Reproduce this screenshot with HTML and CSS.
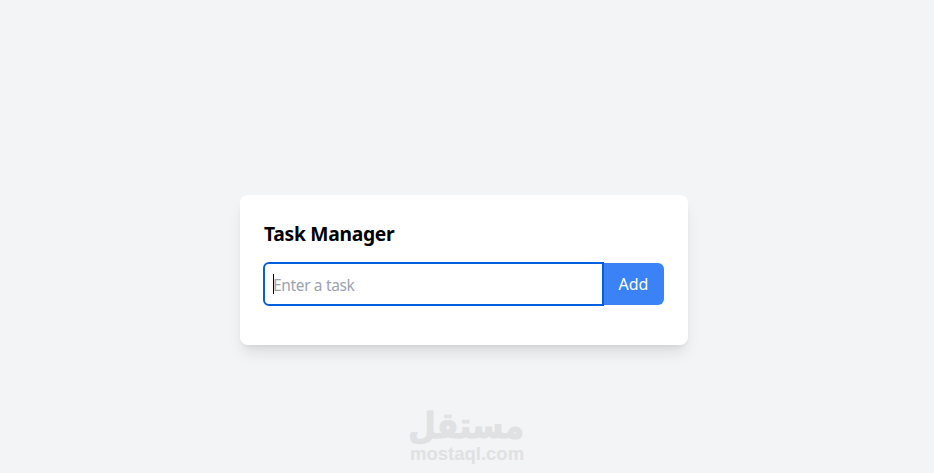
FILE: index.html
```html
<!DOCTYPE html>
<html lang="en">
<head>
    <meta charset="UTF-8">
    <meta name="viewport" content="width=device-width, initial-scale=1.0">
    <title>Task Manager</title>
    <link rel="stylesheet" href="styles.css">
</head>
<body>
    <div class="card">
        <h1 class="card_title">Task Manager</h1>
        <div class="task_form">
            <div class="task_input">
                <span class="caret"></span>
                <span class="placeholder">Enter a task</span>
            </div>
            <button class="add_btn" type="button">Add</button>
        </div>
    </div>

    <div class="watermark">
        <div class="watermark_ar" lang="ar" dir="rtl">مستقل</div>
        <div class="watermark_en">mostaql.com</div>
    </div>
</body>
</html>
```

FILE: styles.css
```css
/* reset */
html,body{margin: 0; padding: 0; height: 100%;}
h1{margin: 0;}

/* layout */
body{
    background-color: #f3f4f6;
    font-family: "Noto Sans", "Open Sans", sans-serif;
    display: flex; justify-content: center; align-items: flex-start;
    padding: 195px 6px 0 0; box-sizing: border-box;
    overflow: hidden;
    position: relative;
}

.card{
    width: 448px; height: 150px; box-sizing: border-box;
    padding: 25px 24px 24px;
    background-color: #fff;
    border-radius: 8px;
    box-shadow: 0 10px 15px -3px rgba(0,0,0,.1), 0 4px 6px -4px rgba(0,0,0,.1);
}
.card_title{
    font-size: 19.3px; line-height: 28px; font-weight: 700; color: #000;
    margin-bottom: 14px;
    letter-spacing: -0.3px;
}

.task_form{display: flex; align-items: center; margin-left: -1px;}
.task_input{
    width: 341px; height: 44px; box-sizing: border-box;
    border: 2px solid #0060df;
    border-radius: 6px 0 0 6px;
    display: flex; align-items: center;
    padding-left: 8px;
    position: relative;
}
.caret{width: 1px; height: 20px; background-color: #000; margin-right: -1px;}
.placeholder{font-size: 15.5px; color: #9ca3af; letter-spacing: -0.35px; position: relative; top: 1px;}

.add_btn{
    width: 61px; height: 42px; margin-left: -1px;
    border: 0; padding: 0;
    background-color: #3b82f6; color: #fff;
    font-family: inherit; font-size: 16px;
    border-radius: 0 6px 6px 0;
}

/* watermark over the page */
.watermark{
    position: absolute; left: 410px; top: 403px; width: 114px;
    text-align: center; color: #dfe1e3;
}
.watermark_ar{
    font-family: "DejaVu Sans", sans-serif; font-weight: 700;
    font-size: 36px; line-height: 42px;
    transform: translateY(2px) scaleX(.88);
    transform-origin: right center;
    white-space: nowrap;
    -webkit-text-stroke: 1px #dfe1e3;
}
.watermark_en{
    font-family: "Liberation Sans", sans-serif; font-weight: 700;
    font-size: 18.5px; line-height: 18px;
}
```
